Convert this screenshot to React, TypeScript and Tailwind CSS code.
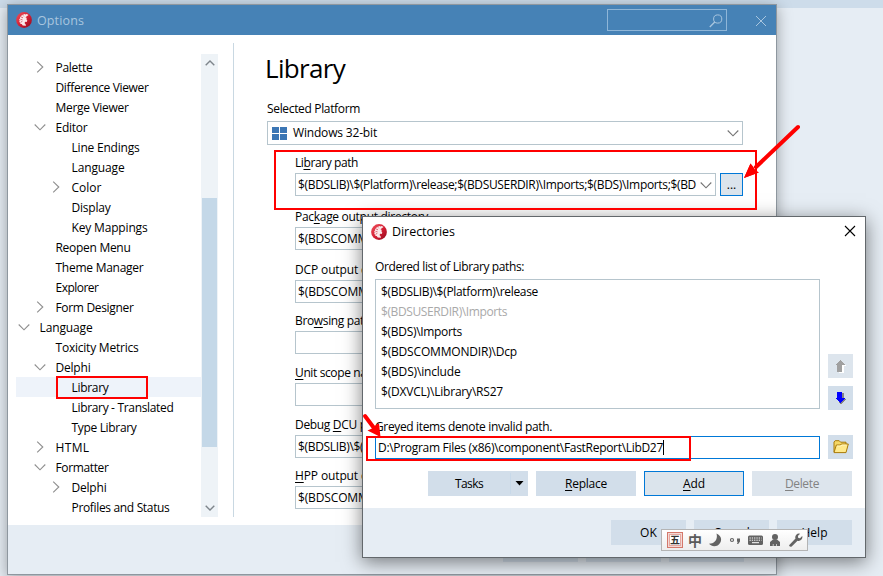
import { useLayoutEffect, useRef, useState, type ReactNode } from "react";

/** Text whose tracking is adjusted so that it spans exactly `w` pixels. */
function Fit({ w, className = "", children }: { w: number; className?: string; children: ReactNode }) {
  const ref = useRef<HTMLSpanElement>(null);
  const [gap, setGap] = useState(0);
  useLayoutEffect(() => {
    const el = ref.current;
    if (!el) return;
    el.style.letterSpacing = "0px";
    const n = (el.textContent || "").length;
    setGap((w - el.getBoundingClientRect().width) / n);
    el.style.letterSpacing = "";
  }, [w]);
  return (
    <span ref={ref} className={`inline-block shrink-0 whitespace-pre ${className}`} style={{ letterSpacing: `${gap}px` }}>
      {children}
    </span>
  );
}

const U = ({ children }: { children: string }) => (
  <span className="underline decoration-1 underline-offset-2">{children}</span>
);

function Chevron({ open, className = "" }: { open: boolean; className?: string }) {
  return (
    <svg width="12" height="12" viewBox="0 0 12 12" fill="none" stroke="currentColor" strokeWidth="1.1" className={`shrink-0 ${className}`}>
      <path d={open ? "M.7 3.5 6 8.8 11.3 3.5" : "M3.2.7 8.8 6 3.2 11.3"} />
    </svg>
  );
}

function AppLogo() {
  return (
    <svg width="16" height="16" viewBox="0 0 16 16" className="shrink-0">
      <defs>
        <linearGradient id="logo" x1="0" y1="0" x2="1" y2="1">
          <stop offset="0" stopColor="#f0525c" />
          <stop offset=".55" stopColor="#d21c32" />
          <stop offset="1" stopColor="#8c0a1c" />
        </linearGradient>
      </defs>
      <circle cx="8" cy="8" r="7.9" fill="url(#logo)" />
      <path
        d="M12.500 3 10.800 2 9.600 2.400 8.200 1.900 7.200 2.800 5.800 3 5.300 4.200 4.100 5 4.200 6.200 3.100 7.400 3.700 8.600 3.200 9.900 4.300 10.800 4.400 12 5.700 12.100 6.700 13.400 10 13.700 9.600 12.300 8.500 10.900 9.300 9.800 11 9.900 10.800 8.900 11.400 8.200 10.300 7.200 10.800 5.900 9.500 5.200 10.800 4.200Z"
        fill="#fbe9ea"
      />
      <path d="M5.200 5.200 7 5.700M4.400 7.800 6.400 7.400M4.700 10.400 6.500 9M7 3.400l.8.900" stroke="#d0354a" strokeWidth=".7" />
    </svg>
  );
}

type Node = { t: string; l: 0 | 1 | 2; w: number; c?: "open" | "shut"; on?: boolean };
const tree: Node[] = [
  { t: "Palette", l: 1, w: 37, c: "shut" },
  { t: "Difference Viewer", l: 1, w: 93 },
  { t: "Merge Viewer", l: 1, w: 73 },
  { t: "Editor", l: 1, w: 32, c: "open" },
  { t: "Line Endings", l: 2, w: 68 },
  { t: "Language", l: 2, w: 53 },
  { t: "Color", l: 2, w: 30, c: "shut" },
  { t: "Display", l: 2, w: 39 },
  { t: "Key Mappings", l: 2, w: 76 },
  { t: "Reopen Menu", l: 1, w: 75 },
  { t: "Theme Manager", l: 1, w: 88 },
  { t: "Explorer", l: 1, w: 43 },
  { t: "Form Designer", l: 1, w: 78, c: "shut" },
  { t: "Language", l: 0, w: 53, c: "open" },
  { t: "Toxicity Metrics", l: 1, w: 83 },
  { t: "Delphi", l: 1, w: 35, c: "open" },
  { t: "Library", l: 2, w: 37, on: true },
  { t: "Library - Translated", l: 2, w: 102 },
  { t: "Type Library", l: 2, w: 65 },
  { t: "HTML", l: 1, w: 34, c: "shut" },
  { t: "Formatter", l: 1, w: 53, c: "open" },
  { t: "Delphi", l: 2, w: 35, c: "shut" },
  { t: "Profiles and Status", l: 2, w: 98 },
];
const indent = { 0: "pl-[2px]", 1: "pl-[18px]", 2: "pl-[34px]" };

function Tree() {
  return (
    <div className="ml-2 mt-[22px] w-[185px] shrink-0">
      {tree.map((n, i) => (
        <div key={i} className={`flex h-5 items-center ${indent[n.l]} ${n.on ? "bg-[#eef3fa]" : ""}`}>
          <span className="mr-[5.5px] flex w-4 shrink-0">{n.c && <Chevron open={n.c === "open"} className="text-[#8f8f8f]" />}</span>
          <Fit w={n.w} className="mt-[2px]">{n.t}</Fit>
        </div>
      ))}
    </div>
  );
}

function Label({ w, className = "", children }: { w: number; className?: string; children: ReactNode }) {
  return <div className={`h-4 pt-px ${className}`}><Fit w={w}>{children}</Fit></div>;
}

function Field({ gap, label, lw, value, vw }: { gap: string; label: ReactNode; lw: number; value?: string; vw?: number }) {
  return (
    <div className={`ml-7 ${gap}`}>
      <Label w={lw}>{label}</Label>
      <div className="mt-[3px] flex h-[23px] w-[449px] items-center border border-[#b6c5cd] bg-white pl-[2px]">
        {value && <Fit w={vw ?? 100}>{value}</Fit>}
      </div>
    </div>
  );
}

function OptionsWindow() {
  return (
    <div className="absolute left-[7px] top-1 flex h-[571px] w-[770px] flex-col border border-[#8e979f] bg-white shadow-[0_3px_14px_rgba(0,0,0,0.34)]">
      <div className="flex h-[30px] shrink-0 items-center bg-[#4682b6] pl-2">
        <AppLogo />
        <Fit w={47} className="ml-[5px] mt-px text-[12.5px] text-[#a9c6df]">Options</Fit>
        <div className="ml-auto mr-[28px] flex h-[22px] w-[120px] items-center justify-end border border-[#8fb6d8] pr-[3px]">
          <svg width="14" height="14" viewBox="0 0 14 14" fill="none" stroke="#a9c6df" className="mt-px">
            <circle cx="8.7" cy="5" r="4.1" /><path d="M5.8 8 .8 13" strokeWidth="1.3" />
          </svg>
        </div>
        <svg width="12" height="12" viewBox="0 0 12 12" stroke="#a9c6df" strokeWidth="1" className="mr-[9px] mt-px"><path d="m1 1 10 10M11 1 1 11" /></svg>
      </div>
      <div className="flex h-[490px] shrink-0">
        <Tree />
        <div className="mt-[19px] flex h-[463px] w-[17px] shrink-0 flex-col items-center bg-[#eef3f7]">
          <svg width="10" height="6" viewBox="0 0 10 6" fill="none" stroke="#7e858b" strokeWidth="1.4" className="mt-[6px]"><path d="M.7 5.2 5 1 9.3 5.2" /></svg>
          <div className="mt-[132px] h-[249px] w-[15px] bg-[#c4d8e8]" />
          <svg width="10" height="6" viewBox="0 0 10 6" fill="none" stroke="#7e858b" strokeWidth="1.4" className="mt-[58px]"><path d="M.7.8 5 5 9.3.8" /></svg>
        </div>
        <div className="ml-[15px] mt-2 h-[474px] w-px shrink-0 bg-[#c9d8e2]" />
        <div className="ml-[33px] w-[476px] shrink-0">
          <div className="-ml-[2px] mt-[17px] flex h-8 items-center"><Fit w={80} className="text-[26px]">Library</Fit></div>
          <Label w={93} className="mt-4">Selected Platform</Label>
          <div className="mt-[5px] flex h-6 items-center border border-[#b6c5cd] pl-1 pr-[3px]">
            <div className="grid grid-cols-2 gap-px">
              {[0, 1, 2, 3].map((i) => <i key={i} className="h-[6px] w-[7px] bg-[#3b76b5]" />)}
            </div>
            <Fit w={84} className="ml-[6px]">Windows 32-bit</Fit>
            <Chevron open className="-mt-px ml-auto text-[#747474]" />
          </div>
          <div className="ml-7 mt-[9px]">
            <Label w={63}>Li<U>b</U>rary path</Label>
            <div className="mt-[3px] flex gap-1">
              <div className="flex h-[23px] w-[421px] items-center border border-[#b6c5cd] pl-[2px] pr-[3px]">
                <Fit w={398}>{"$(BDSLIB)\\$(Platform)\\release;$(BDSUSERDIR)\\Imports;$(BDS)\\Imports;$(BD"}</Fit>
                <Chevron open className="ml-auto text-[#747474]" />
              </div>
              <div className="flex h-[23px] w-[23px] items-center justify-center border border-[#0078d7] bg-[#dbe4ec]">...</div>
            </div>
          </div>
          <Field gap="mt-[12px]" label={<>Pac<U>k</U>age output directory</>} lw={133} value="$(BDSCOMMONDIR)\Bpl" vw={132} />
          <Field gap="mt-[11px]" label="DCP output directory" lw={115} value="$(BDSCOMMONDIR)\Dcp" vw={137} />
          <Field gap="mt-[9px]" label={<>Bro<U>w</U>sing path</>} lw={76} />
          <Field gap="mt-[10px]" label={<><U>U</U>nit scope names</>} lw={94} />
          <Field gap="mt-[10px]" label={<>Debug <U>D</U>CU path</>} lw={89} value="$(BDSLIB)\$(Platform)\debug" vw={152} />
          <Field gap="mt-[9px]" label={<><U>H</U>PP output directory</>} lw={115} value="$(BDSCOMMONDIR)\hpp" vw={137} />
        </div>
      </div>
      <div className="flex flex-1 gap-2 bg-[#e6edf4] pl-[495px] pt-3">
        {[0, 1, 2].map((i) => <div key={i} className="h-[25px] w-[75px] bg-[#d2deea]" />)}
      </div>
    </div>
  );
}

const paths: [string, number, boolean?][] = [
  ["$(BDSLIB)\\$(Platform)\\release", 157],
  ["$(BDSUSERDIR)\\Imports", 126, true],
  ["$(BDS)\\Imports", 81],
  ["$(BDSCOMMONDIR)\\Dcp", 136],
  ["$(BDS)\\include", 79.5],
  ["$(DXVCL)\\Library\\RS27", 122],
];

function PathArrow({ down }: { down?: boolean }) {
  return (
    <svg width="11" height="13" viewBox="0 0 11 13" shapeRendering="crispEdges">
      {down ? (
        <>
          <path d="M3 1h6v6h2L6 13 2 7z" fill="#848484" />
          <path d="M2 0h5v6h3L5 11 0 6h2z" fill="#0000ff" />
        </>
      ) : (
        <>
          <path d="M6 1 11 6H9v7H4V6z" fill="#fff" />
          <path d="M5 0 10 5H7v7H2V5H0z" fill="#a0a0a0" />
        </>
      )}
    </svg>
  );
}

function DirectoriesDialog() {
  const btn = "flex h-[25px] items-center justify-center ";
  return (
    <div className="absolute left-[362px] top-[216px] flex h-[342px] w-[504px] flex-col border border-[#63686c] bg-white shadow-[0_4px_18px_rgba(0,0,0,0.5)]">
      <div className="flex h-[30px] shrink-0 items-center pl-2 pr-[9px]">
        <AppLogo />
        <Fit w={63} className="ml-[5px] text-[12.5px]">Directories</Fit>
        <svg width="12" height="12" viewBox="0 0 12 12" stroke="#000" strokeWidth="1.1" className="-mt-[2px] ml-auto"><path d="m1 1 10 10M11 1 1 11" /></svg>
      </div>
      <div className="h-[261px] shrink-0 pl-3">
        <Label w={149} className="mt-[11px]">Ordered list of Library paths:</Label>
        <div className="mt-[5px] flex gap-2">
          <div className="h-[130px] w-[445px] border border-[#b6c5cd] pl-[5px] pt-[2px]">
            {paths.map(([t, w, grey]) => (
              <div key={t} className={`flex h-5 items-center ${grey ? "text-[#a9a9a9]" : ""}`}><Fit w={w}>{t}</Fit></div>
            ))}
          </div>
          <div className="flex flex-col gap-2 pt-[75px]">
            <div className="flex h-6 w-[25px] items-center justify-center bg-[#dde5ed]"><PathArrow /></div>
            <div className="flex h-6 w-[25px] items-center justify-center bg-[#d2deea]"><PathArrow down /></div>
          </div>
        </div>
        <Label w={177} className="mt-[8px]">Greyed items denote invalid path.</Label>
        <div className="mt-px flex gap-2">
          <div className="mt-px flex h-[23px] w-[445px] items-center border border-[#0078d7] pl-[2px]">
            <Fit w={285}>{"D:\\Program Files (x86)\\component\\FastReport\\LibD27"}</Fit>
            <i className="mb-px h-[15px] w-px bg-black" />
          </div>
          <div className="flex h-6 w-[25px] items-center justify-center bg-[#d2deea]">
            <svg width="16" height="14" viewBox="0 0 16 14" stroke="#a97a08" strokeLinejoin="round">
              <path d="M1 12V2l1.2-1.3h4L7.6 2.2H13V5" fill="#f5d766" />
              <path d="M1 12.6 3.3 5h4l1-1h7L13 12.6Z" fill="#ffe98b" />
              <path d="M4 6h4l1-1h4.5" stroke="#fff8cc" fill="none" strokeWidth=".8" />
            </svg>
          </div>
        </div>
        <div className="mt-3 flex gap-2 pl-[53px]">
          <div className={btn + "w-[100px] bg-[#d2deea]"}>
            <div className="flex flex-1 justify-center"><Fit w={28}>Tasks</Fit></div>
            <i className="h-[21px] w-px bg-[#c8d9e9]" />
            <svg width="17" height="5" viewBox="0 0 17 5"><path d="M4.5 0h8l-4 4.5z" /></svg>
          </div>
          <div className={btn + "w-[100px] bg-[#d2deea]"}><Fit w={42}><U>R</U>eplace</Fit></div>
          <div className={btn + "w-[100px] border border-[#0078d7] bg-[#dbe4ec]"}><Fit w={22}><U>A</U>dd</Fit></div>
          <div className={btn + "w-[100px] bg-[#dde5ed] text-[#838383]"}><Fit w={34}><U>D</U>elete</Fit></div>
        </div>
      </div>
      <div className="flex flex-1 gap-2 bg-[#e6edf4] pl-[248px] pt-3">
        <div className={btn + "w-[75px] bg-[#d2deea]"}><Fit w={17}>OK</Fit></div>
        <div className={btn + "w-[75px] bg-[#d2deea]"}><Fit w={36}>Cancel</Fit></div>
        <div className={btn + "w-[75px] bg-[#d2deea]"}><Fit w={26}>Help</Fit></div>
      </div>
    </div>
  );
}

function ImeBar() {
  return (
    <div className="absolute left-[661px] top-[529px] flex h-[22px] w-[147px] items-center border border-[#b4b4b4] bg-gradient-to-b from-white to-[#eeeeee] pl-[5px] font-['Noto_Sans_CJK_SC',sans-serif] font-bold text-[#5b5b5b]">
      <span className="flex h-4 w-4 shrink-0 items-center justify-center border border-[#d4786b] bg-[#f3d9d5] p-px">
        <span className="flex h-full w-full items-center justify-center border border-[#e6a79f] bg-white text-[10px] leading-none text-[#333]">五</span>
      </span>
      <span className="-mt-px ml-[5px] w-[14px] shrink-0 text-[14px] leading-none">中</span>
      <svg width="95" height="14" viewBox="0 0 95 14" fill="#636363" className="ml-[6px] shrink-0">
        <path d="M8.500 .5C13.300 2.600 14 6.500 12.200 9.700 10 14 4 14.500 1 10.800 7 10.600 10 6 8.500 .5Z" />
        <circle cx="24" cy="7" r="1.500" fill="none" stroke="#636363" strokeWidth="1.200" />
        <path d="M29 5.500h3v3l-1.800 2.500h-1.200l.8-2.200h-.8z" />
        <rect x="40" y="2.500" width="15" height="9.500" rx="1.500" />
        <path d="M41.500 5h12M41.500 7.200h12" stroke="#fff" strokeWidth="1" strokeDasharray="1.300 1" />
        <path d="M44 9.700h7" stroke="#fff" />
        <circle cx="67" cy="4" r="3" />
        <path d="M65 6.500h4l3 2.500v4h-3v-2h-.7v2h-2.800v-2h-.7v2H62V9z" />
        <path d="m81.300 12 6.200-6.400A3.700 3.700 0 0 1 92.100 .8L89.900 3.100l.4 1.800 1.700.4 2.200-2.200A3.700 3.700 0 0 1 89.500 7.700L83.700 13.400C82.300 14.200 80.700 13.200 81.300 12Z" />
      </svg>
    </div>
  );
}

export default function App() {
  return (
    <div className="relative h-[576px] w-[883px] overflow-hidden bg-[#e6edf4] font-['Open_Sans','Noto_Sans',sans-serif] text-[12px] leading-4 text-black">
      <div className="h-2 bg-[#cddcea]" />
      <OptionsWindow />
      <DirectoriesDialog />
      <div className="absolute left-[56px] top-[376px] h-[23px] w-[92px] border-2 border-[#ff0000]" />
      <div className="absolute left-[274px] top-[150px] h-[60px] w-[483px] border-2 border-[#ff0000]" />
      <div className="absolute left-[366px] top-[436px] h-[25px] w-[325px] border-2 border-[#ff0000]" />
      <svg className="absolute left-[743px] top-[122px]" width="60" height="58" viewBox="743 122 60 58" fill="#ff0000">
        <path d="M798 127 756 167" stroke="#ff0000" strokeWidth="4" strokeLinecap="round" />
        <path d="M744 178 750.500 163.500 753 168 758.500 172.500Z" />
        <path d="m744 178 6.500-14.500 3 3.500 1.500 3.500 4 2z" />
      </svg>
      <svg className="absolute left-[360px] top-[411px]" width="24" height="28" viewBox="360 411 24 28" fill="#ff0000">
        <path d="M365 416 374 428" stroke="#ff0000" strokeWidth="4" strokeLinecap="round" />
        <path d="M380.500 437 367.500 430.500 372 428.500 376.500 424.500 379 423.500Z" />
      </svg>
      <ImeBar />
    </div>
  );
}
